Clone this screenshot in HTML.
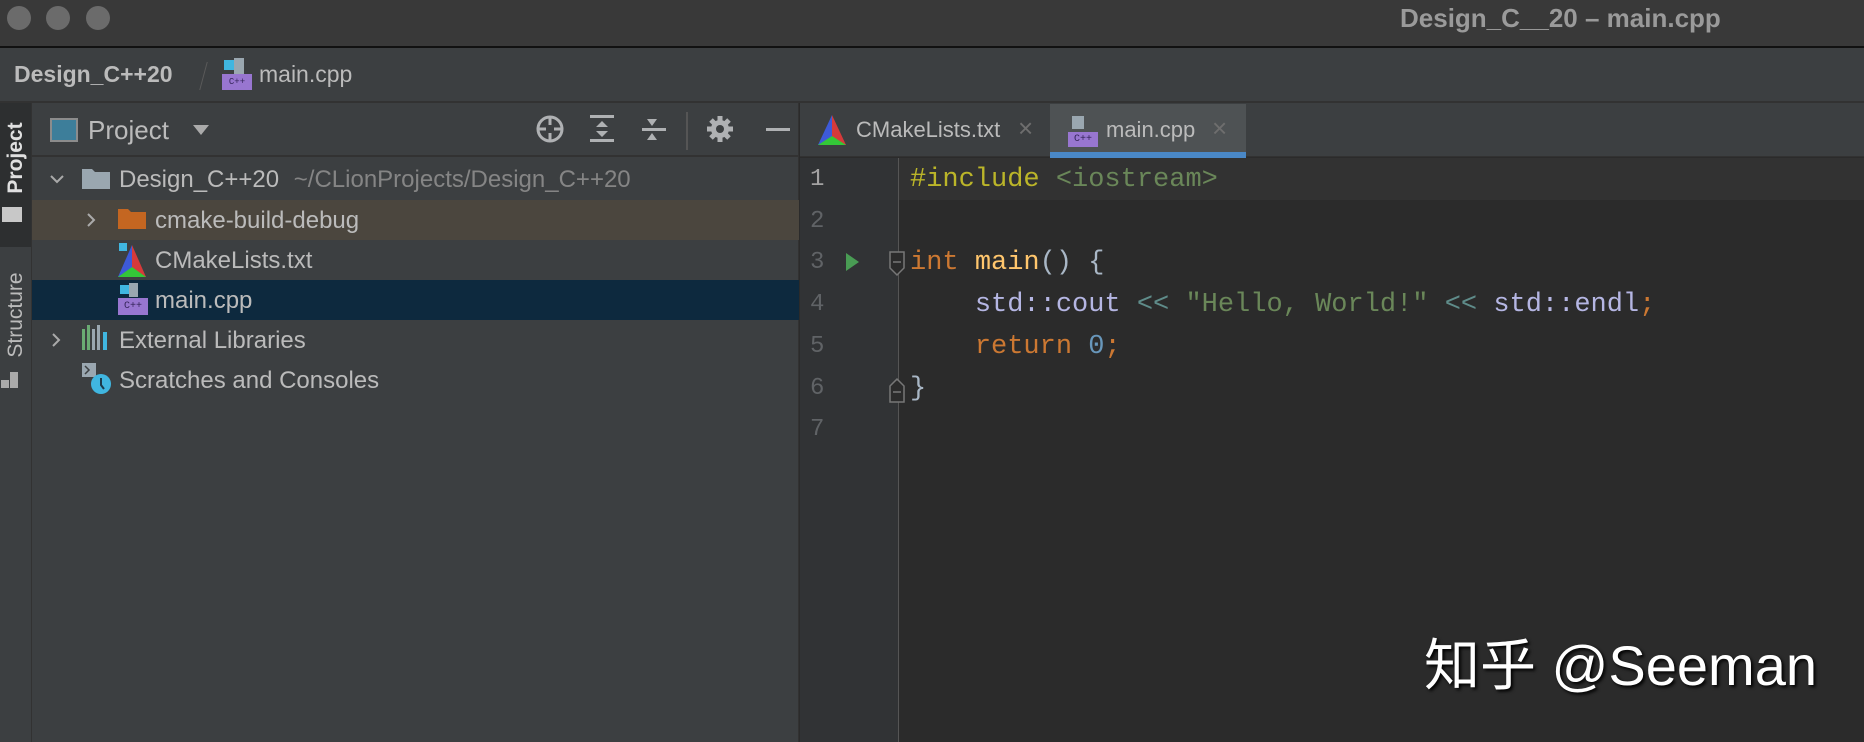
<!DOCTYPE html>
<html><head><meta charset="utf-8"><style>
*{margin:0;padding:0;box-sizing:border-box}
body{width:1864px;height:742px;overflow:hidden;background:#2b2b2b;font-family:"Liberation Sans",sans-serif;position:relative}
.abs{position:absolute}
.t{color:#bbbbbb;font-size:24px;white-space:nowrap;line-height:40px}
.code{font-family:"Liberation Mono",monospace;font-size:27px;white-space:pre;position:absolute;left:910px;line-height:42px}
.ln{font-family:"Liberation Mono",monospace;font-size:24px;color:#606366;position:absolute;left:810px;line-height:42px}
</style></head><body>
<!-- title bar -->
<div class="abs" style="left:0;top:0;width:1864px;height:46px;background:#393939"></div>
<div class="abs" style="left:0;top:46px;width:1864px;height:2px;background:#111"></div>
<div class="abs" style="left:7px;top:6px;width:24px;height:24px;border-radius:50%;background:#6b6b6b"></div>
<div class="abs" style="left:46px;top:6px;width:24px;height:24px;border-radius:50%;background:#6b6b6b"></div>
<div class="abs" style="left:86px;top:6px;width:24px;height:24px;border-radius:50%;background:#6b6b6b"></div>
<div class="abs t" style="left:1400px;top:0;line-height:36px;font-weight:bold;color:#9a9a9a;font-size:26px">Design_C__20 – main.cpp</div>
<!-- breadcrumb -->
<div class="abs" style="left:0;top:48px;width:1864px;height:55px;background:#3c3f41;border-bottom:2px solid #323232"></div>
<div class="abs t" style="left:14px;top:54px;font-weight:bold;font-size:23px">Design_C++20</div>
<div class="abs" style="left:203px;top:62px;width:1px;height:28px;background:#5a5a5a;transform:skewX(-15deg)"></div>
<div class="abs" style="left:224px;top:60px;width:10px;height:10px;background:#40b6e0"></div>
<div class="abs" style="left:234px;top:58px;width:10px;height:16px;background:#9aa7b0"></div>
<div class="abs" style="left:222px;top:74px;width:30px;height:16px;background:#9876d0;font:9px 'Liberation Mono';color:#35255a;line-height:16px;text-align:center">C++</div>
<div class="abs t" style="left:259px;top:54px;font-size:23px">main.cpp</div>
<!-- left stripe -->
<div class="abs" style="left:0;top:103px;width:32px;height:639px;background:#3c3f41;border-right:1px solid #323232"></div>
<div class="abs" style="left:0;top:103px;width:31px;height:144px;background:#2d2f30"></div>
<div class="abs" style="left:-44px;top:143px;width:120px;height:30px;transform:rotate(-90deg);color:#e0e0e0;font-size:21px;font-weight:bold;text-align:center;line-height:30px">Project</div>
<div class="abs" style="left:2px;top:207px;width:20px;height:15px;background:#c8c8c8"></div>
<div class="abs" style="left:-44px;top:300px;width:120px;height:30px;transform:rotate(-90deg);color:#bbbbbb;font-size:21px;text-align:center;line-height:30px">Structure</div>
<div class="abs" style="left:1px;top:380px;width:8px;height:8px;background:#aaa"></div>
<div class="abs" style="left:10px;top:372px;width:8px;height:16px;background:#aaa"></div>
<!-- project pane -->
<div class="abs" style="left:32px;top:103px;width:767px;height:639px;background:#3c3f41;border-right:1px solid #323232"></div>
<div class="abs" style="left:32px;top:155px;width:767px;height:2px;background:#323232"></div>
<div class="abs" style="left:50px;top:118px;width:28px;height:24px;border:2px solid #8c8c8c;background:#3d7e9a"></div>
<div class="abs t" style="left:88px;top:110px;font-size:26px">Project</div>
<div class="abs" style="left:193px;top:125px;width:0;height:0;border-left:8px solid transparent;border-right:8px solid transparent;border-top:10px solid #aaa"></div>
<svg class="abs" style="left:520px;top:100px" width="280" height="56" viewBox="0 0 280 56">
<g fill="none" stroke="#afb1b3" stroke-width="3"><circle cx="30" cy="29" r="12"/><path d="M30 16v9M30 33v9M17 29h9M34 29h9"/></g>
<g fill="#afb1b3"><rect x="70" y="15" width="24" height="3"/><rect x="70" y="39" width="24" height="3"/><path d="M76 27l6-6 6 6zM76 31l6 6 6-6z"/>
<rect x="122" y="28" width="24" height="3"/><path d="M127 19h10l-5 7zM127 40h10l-5-7z"/>
<rect x="166" y="12" width="2" height="38" fill="#555"/>
<circle cx="200" cy="29" r="9"/><rect x="246" y="28" width="24" height="3"/></g>
<g stroke="#afb1b3" stroke-width="5"><path d="M200 16v26M187 29h26M191 20l18 18M209 20l-18 18"/></g>
<circle cx="200" cy="29" r="4" fill="#3c3f41"/>
</svg>
<!-- tree rows -->
<div class="abs" style="left:32px;top:200px;width:767px;height:40px;background:#4b463e"></div>
<div class="abs" style="left:32px;top:280px;width:767px;height:40px;background:#0d293e"></div>
<svg class="abs" style="left:40px;top:157px" width="120" height="250">
<g fill="none" stroke="#aaa" stroke-width="2"><path d="M11 19l6 6 6-6"/><path d="M48 57l6 6-6 6"/><path d="M13 177l6 6-6 6"/></g>
<path d="M42 12h10l3 3h15v17h-28z" fill="#9aa7b0"/>
<path d="M78 52h10l3 3h15v17h-28z" fill="#d2691e" opacity=".9"/>
<g><rect x="42" y="172" width="3" height="21" fill="#6aab73"/><rect x="47" y="168" width="3" height="25" fill="#6aab73"/><rect x="52" y="172" width="3" height="21" fill="#9aa7b0"/><rect x="57" y="168" width="3" height="25" fill="#9aa7b0"/><rect x="63" y="175" width="4" height="18" fill="#40b6e0"/></g>
<rect x="42" y="206" width="14" height="14" fill="#9aa7b0"/><path d="M45 209l4 4-4 4" stroke="#3c3f41" stroke-width="1.5" fill="none"/><circle cx="61" cy="227" r="10" fill="#40b6e0"/><path d="M61 221v7l3 4" stroke="#1d3a4a" stroke-width="2" fill="none"/>
</svg>
<svg class="abs" style="left:117px;top:243px" width="30" height="36"><rect x="2" y="0" width="8" height="8" fill="#40b6e0"/><path d="M15 2L1 34h14z" fill="#3d5ad8"/><path d="M15 2L29 34h-14z" fill="#d63a3a"/><path d="M1 34l14-10 14 10z" fill="#34c738"/></svg>
<div class="abs" style="left:120px;top:285px;width:9px;height:9px;background:#40b6e0"></div>
<div class="abs" style="left:129px;top:283px;width:9px;height:14px;background:#9aa7b0"></div>
<div class="abs" style="left:118px;top:298px;width:30px;height:17px;background:#9876d0;font:10px 'Liberation Mono';color:#35255a;line-height:17px;text-align:center">C++</div>
<div class="abs t" style="left:119px;top:160px">Design_C++20 <span style="color:#858585;margin-left:8px">~/CLionProjects/Design_C++20</span></div>
<div class="abs t" style="left:155px;top:201px">cmake-build-debug</div>
<div class="abs t" style="left:155px;top:241px">CMakeLists.txt</div>
<div class="abs t" style="left:155px;top:281px">main.cpp</div>
<div class="abs t" style="left:119px;top:321px">External Libraries</div>
<div class="abs t" style="left:119px;top:361px">Scratches and Consoles</div>
<!-- tabs -->
<div class="abs" style="left:800px;top:103px;width:1064px;height:54px;background:#3c3f41;border-bottom:1px solid #323232"></div>
<div class="abs" style="left:1050px;top:104px;width:196px;height:54px;background:#4e5254;border-bottom:6px solid #4a88c7"></div>
<svg class="abs" style="left:816px;top:115px" width="32" height="30"><path d="M16 0L2 30h14z" fill="#3d5ad8"/><path d="M16 0L30 30h-14z" fill="#d63a3a"/><path d="M2 30l14-9 14 9z" fill="#34c738"/></svg>
<div class="abs t" style="left:856px;top:110px;font-size:22px">CMakeLists.txt</div>
<div class="abs" style="left:1018px;top:108px;color:#6e6e6e;font-size:26px;line-height:40px">×</div>
<div class="abs" style="left:1072px;top:116px;width:12px;height:13px;background:#9aa7b0"></div>
<div class="abs" style="left:1068px;top:132px;width:30px;height:15px;background:#9876d0;font:10px 'Liberation Mono';color:#35255a;line-height:15px;text-align:center">C++</div>
<div class="abs t" style="left:1106px;top:110px;font-size:22px">main.cpp</div>
<div class="abs" style="left:1212px;top:108px;color:#6e6e6e;font-size:26px;line-height:40px">×</div>
<!-- editor -->
<div class="abs" style="left:800px;top:158px;width:98px;height:584px;background:#313335"></div>
<div class="abs" style="left:898px;top:158px;width:1px;height:584px;background:#555"></div>
<div class="abs" style="left:899px;top:158px;width:965px;height:42px;background:#323232"></div>
<div class="ln" style="top:159px;color:#a4a3a3">1</div>
<div class="ln" style="top:201px">2</div>
<div class="ln" style="top:242px">3</div>
<div class="ln" style="top:284px">4</div>
<div class="ln" style="top:326px">5</div>
<div class="ln" style="top:368px">6</div>
<div class="ln" style="top:409px">7</div>
<div class="abs" style="left:846px;top:253px;width:0;height:0;border-top:9px solid transparent;border-bottom:9px solid transparent;border-left:13px solid #499c54"></div>
<svg class="abs" style="left:888px;top:250px" width="20" height="160"><path d="M2 2h14v16l-7 7-7-7z" fill="#2b2b2b" stroke="#777" stroke-width="1.5"/><path d="M5 12h8" stroke="#777" stroke-width="1.5"/><path d="M2 152h14v-16l-7-7-7 7z" fill="#2b2b2b" stroke="#777" stroke-width="1.5"/><path d="M5 142h8" stroke="#777" stroke-width="1.5"/></svg>
<div class="code" style="top:159px"><span style="color:#bbb529">#include</span> <span style="color:#6a8759">&lt;iostream&gt;</span></div>
<div class="code" style="top:242px"><span style="color:#cc7832">int</span> <span style="color:#ffc66d">main</span><span style="color:#a9b7c6">() {</span></div>
<div class="code" style="top:284px">    <span style="color:#b5b6e3">std::cout</span> <span style="color:#5f8c8a">&lt;&lt;</span> <span style="color:#6a8759">"Hello, World!"</span> <span style="color:#5f8c8a">&lt;&lt;</span> <span style="color:#b5b6e3">std::endl</span><span style="color:#cc7832">;</span></div>
<div class="code" style="top:326px">    <span style="color:#cc7832">return</span> <span style="color:#6897bb">0</span><span style="color:#cc7832">;</span></div>
<div class="code" style="top:368px;color:#a9b7c6">}</div>
<div class="abs" style="left:1424px;top:626px;font-family:'Liberation Sans','Noto Sans CJK SC',sans-serif;font-size:56px;color:#fff;white-space:nowrap;text-shadow:2px 2px 3px #000;line-height:80px">知乎 @Seeman</div>
</body></html>
